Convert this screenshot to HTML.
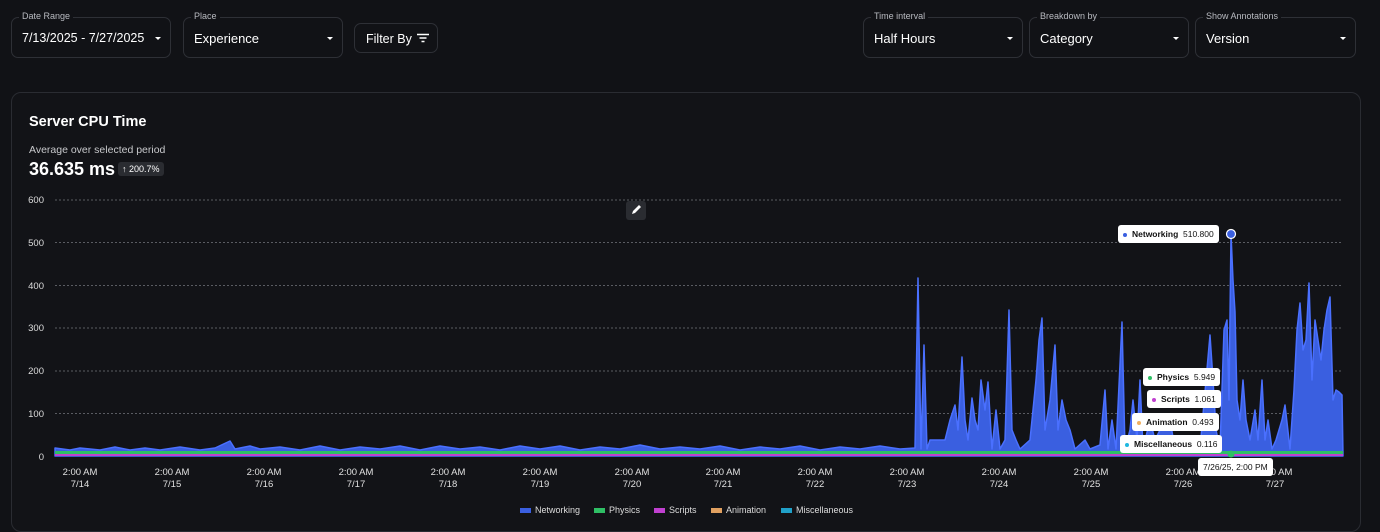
<!DOCTYPE html>
<html><head><meta charset="utf-8"><style>
*{box-sizing:border-box;margin:0;padding:0}
body{width:1380px;height:522px;background:#111216;font-family:"Liberation Sans",sans-serif;color:#fff;position:relative;overflow:hidden}
.f{position:absolute;top:17px;height:41px;border:1px solid #2e3036;border-radius:7px}
.f .l{position:absolute;top:-7px;left:7px;background:#111216;padding:0 3px;font-size:9px;color:#b8bac0}
.f .v{position:absolute;left:10px;top:13px;font-size:13px}
.f .a{position:absolute;right:9px;top:19px;width:0;height:0;border-left:3px solid transparent;border-right:3px solid transparent;border-top:3px solid #fff}
.card{position:absolute;left:11px;top:92px;width:1350px;height:440px;border:1px solid #2a2c32;border-radius:10px;background:#121317}
.t{position:absolute;font-size:9.5px;color:#e0e0e0;text-align:center;line-height:12px}
.tip{position:absolute;background:#fff;color:#111;border-radius:3px;font-size:8.5px;height:18px;line-height:18px;padding:0 5px}
.tip b{font-weight:bold}
.dot{display:inline-block;width:4px;height:4px;border-radius:50%;margin-right:5px;vertical-align:middle}
.lg{position:absolute;top:505px;font-size:9px;color:#ddd}
.lg i{display:inline-block;width:11px;height:5px;margin-right:4px;vertical-align:middle}
</style></head><body>
<div class="f" style="left:11px;width:160px"><span class="l">Date Range</span><span class="v" style="font-size:12.5px">7/13/2025 - 7/27/2025</span><span class="a"></span></div>
<div class="f" style="left:183px;width:160px"><span class="l">Place</span><span class="v">Experience</span><span class="a"></span></div>
<div class="f" style="left:354px;top:23px;height:30px;width:84px"><span class="v" style="top:8px;left:11px;font-size:12.5px">Filter By</span>
<svg style="position:absolute;left:62px;top:9px" width="12" height="10"><path d="M0 1.5h12M2.5 5h7M4.5 8.5h3" stroke="#fff" stroke-width="1.5"/></svg></div>
<div class="f" style="left:863px;width:160px"><span class="l">Time interval</span><span class="v">Half Hours</span><span class="a"></span></div>
<div class="f" style="left:1029px;width:160px"><span class="l">Breakdown by</span><span class="v">Category</span><span class="a"></span></div>
<div class="f" style="left:1195px;width:161px"><span class="l">Show Annotations</span><span class="v">Version</span><span class="a"></span></div>
<div class="card"></div>
<div style="position:absolute;left:29px;top:114px;font-size:14.5px;font-weight:bold">Server CPU Time</div>
<div style="position:absolute;left:29px;top:144px;font-size:10.5px;color:#c8c9cc">Average over selected period</div>
<div style="position:absolute;left:29px;top:159px;font-size:18px;font-weight:bold">36.635 ms</div>
<div style="position:absolute;left:118px;top:162px;height:14px;padding:0 4px;background:#2a2c31;border-radius:3px;font-size:9px;line-height:14px">↑ 200.7%</div>
<div style="position:absolute;left:626px;top:201px;width:20px;height:19px;background:#2a2c31;border-radius:3px"><svg width="20" height="19"><path d="M6 13l1-3 6-6 2 2-6 6z" fill="#fff"/></svg></div>
<svg style="position:absolute;left:0;top:0" width="1380" height="522">
<g stroke="#5a5c62" stroke-dasharray="2 2" stroke-width="1">
<line x1="55" y1="200" x2="1343" y2="200"/><line x1="55" y1="242.5" x2="1343" y2="242.5"/><line x1="55" y1="285.5" x2="1343" y2="285.5"/><line x1="55" y1="328" x2="1343" y2="328"/><line x1="55" y1="371" x2="1343" y2="371"/><line x1="55" y1="413.5" x2="1343" y2="413.5"/></g>
<g font-size="9.5" fill="#ddd" text-anchor="end" font-family="Liberation Sans"><text x="44" y="203">600</text><text x="44" y="246">500</text><text x="44" y="289">400</text><text x="44" y="331">300</text><text x="44" y="374">200</text><text x="44" y="417">100</text><text x="44" y="460">0</text></g>
<path d="M55 456 L55 448 L70 450 L80 448 L100 450 L115 447 L130 450 L145 448 L160 450 L180 447 L200 450 L215 448 L230 441 L235 449 L250 446 L260 449 L280 447 L300 450 L320 446 L340 450 L360 447 L380 449 L400 446 L420 450 L440 446 L460 449 L480 447 L500 450 L520 446 L540 449 L560 446 L580 450 L600 447 L620 449 L640 445 L660 449 L680 447 L700 449 L720 446 L740 450 L760 447 L780 449 L800 446 L820 450 L840 447 L860 449 L880 446 L900 449 L915 448 L918 278 L921 449 L924 345 L927 449 L930 440 L945 440 L950 420 L955 405 L958 430 L962 357 L965 420 L968 440 L972 398 L975 420 L978 430 L981 380 L985 410 L988 382 L992 449 L996 410 L1000 449 L1005 440 L1009 310 L1012 430 L1016 440 L1020 449 L1030 440 L1036 380 L1039 340 L1042 318 L1045 430 L1050 400 L1055 345 L1058 430 L1062 400 L1066 420 L1070 430 L1075 449 L1085 440 L1090 449 L1100 445 L1105 390 L1108 449 L1112 420 L1116 449 L1122 322 L1125 449 L1130 430 L1133 400 L1137 440 L1140 380 L1143 449 L1150 420 L1155 440 L1160 430 L1170 420 L1175 449 L1180 440 L1190 445 L1200 449 L1210 335 L1213 380 L1216 430 L1220 449 L1224 330 L1227 320 L1229 400 L1231 234 L1233 280 L1235 312 L1237 400 L1240 420 L1243 380 L1246 420 L1250 440 L1255 410 L1258 440 L1262 380 L1265 440 L1268 420 L1272 449 L1276 440 L1282 420 L1285 405 L1290 449 L1294 390 L1297 330 L1300 303 L1303 350 L1306 340 L1309 283 L1312 380 L1315 320 L1318 340 L1321 360 L1324 330 L1327 310 L1330 297 L1333 400 L1336 390 L1339 392 L1342 395 L1343 456 Z" fill="#3a5fe0" stroke="#4a70ff" stroke-width="1.5" stroke-linejoin="round"/>
<rect x="55" y="451" width="1288" height="3" fill="#2fbf65"/>
<rect x="55" y="454" width="1288" height="2" fill="#c040d0"/>
<circle cx="1231" cy="234" r="4.5" fill="#3a5fe0" stroke="#fff" stroke-width="1.2"/>
<circle cx="1231" cy="454" r="3.5" fill="#2fbf65"/>
</svg>
<div class="t" style="left:60px;top:467px;width:40px">2:00 AM<br>7/14</div>
<div class="t" style="left:152px;top:467px;width:40px">2:00 AM<br>7/15</div>
<div class="t" style="left:244px;top:467px;width:40px">2:00 AM<br>7/16</div>
<div class="t" style="left:336px;top:467px;width:40px">2:00 AM<br>7/17</div>
<div class="t" style="left:428px;top:467px;width:40px">2:00 AM<br>7/18</div>
<div class="t" style="left:520px;top:467px;width:40px">2:00 AM<br>7/19</div>
<div class="t" style="left:612px;top:467px;width:40px">2:00 AM<br>7/20</div>
<div class="t" style="left:703px;top:467px;width:40px">2:00 AM<br>7/21</div>
<div class="t" style="left:795px;top:467px;width:40px">2:00 AM<br>7/22</div>
<div class="t" style="left:887px;top:467px;width:40px">2:00 AM<br>7/23</div>
<div class="t" style="left:979px;top:467px;width:40px">2:00 AM<br>7/24</div>
<div class="t" style="left:1071px;top:467px;width:40px">2:00 AM<br>7/25</div>
<div class="t" style="left:1163px;top:467px;width:40px">2:00 AM<br>7/26</div>
<div class="t" style="left:1255px;top:467px;width:40px">2:00 AM<br>7/27</div>
<div class="tip" style="left:1118px;top:225px"><span class="dot" style="background:#3a5fe0"></span><b>Networking</b>&nbsp; 510.800</div>
<div class="tip" style="left:1143px;top:368px"><span class="dot" style="background:#2fbf65"></span><b>Physics</b>&nbsp; 5.949</div>
<div class="tip" style="left:1147px;top:390px"><span class="dot" style="background:#c040d0"></span><b>Scripts</b>&nbsp; 1.061</div>
<div class="tip" style="left:1132px;top:413px"><span class="dot" style="background:#f0b060"></span><b>Animation</b>&nbsp; 0.493</div>
<div class="tip" style="left:1120px;top:435px"><span class="dot" style="background:#20b8e0"></span><b>Miscellaneous</b>&nbsp; 0.116</div>
<div class="tip" style="left:1198px;top:458px;font-weight:normal">7/26/25, 2:00 PM</div>
<div class="lg" style="left:520px"><i style="background:#3a5fe0"></i>Networking</div>
<div class="lg" style="left:594px"><i style="background:#2fbf65"></i>Physics</div>
<div class="lg" style="left:654px"><i style="background:#c040d0"></i>Scripts</div>
<div class="lg" style="left:711px"><i style="background:#e0a060"></i>Animation</div>
<div class="lg" style="left:781px"><i style="background:#20a0c8"></i>Miscellaneous</div>
</body></html>
